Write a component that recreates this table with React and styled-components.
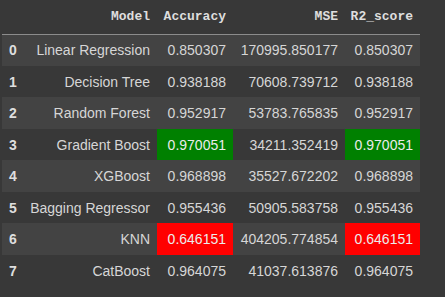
import styled, { createGlobalStyle } from 'styled-components';

const GlobalStyle = createGlobalStyle`
  html, body {
    margin: 0;
    padding: 0;
    background: #383838;
  }
`;

const Page = styled.div`
  width: 445px;
  height: 297px;
  background: #383838;
  overflow: hidden;
`;

const Table = styled.table`
  margin-left: 2px;
  border-collapse: collapse;
  border-spacing: 0;
  table-layout: fixed;
  width: 418px;
  color: #d6d6d6;
  font-family: 'Liberation Sans', Arial, sans-serif;
  font-size: 14px;
`;

const HeadCell = styled.th`
  width: ${(p) => p.$w}px;
  height: 34px;
  padding: 0 7px 0 0;
  box-sizing: border-box;
  text-align: right;
  vertical-align: middle;
  font-family: 'Liberation Mono', 'DejaVu Sans Mono', monospace;
  font-weight: 700;
  font-size: 13px;
  color: #dedede;
  border-bottom: 1px solid #8c8c8c;
  white-space: nowrap;
`;

// rows alternate 32/31px so they land on the same lines as the original 31.5px rows
const Row = styled.tr`
  height: ${(p) => (p.$odd ? 31 : 32)}px;
  background: ${(p) => (p.$odd ? '#383838' : '#434343')};
`;

const IndexCell = styled.th`
  padding: 0 0 0 7px;
  box-sizing: border-box;
  text-align: left;
  font-weight: 700;
  color: #dedede;
`;

const Cell = styled.td`
  padding: 0 7px 0 0;
  box-sizing: border-box;
  text-align: right;
  white-space: nowrap;
  background: ${(p) => p.$bg || 'transparent'};
  color: ${(p) => (p.$bg ? '#ececec' : '#d6d6d6')};
`;

const rows = [
  ['Linear Regression', '0.850307', '170995.850177', '0.850307'],
  ['Decision Tree', '0.938188', '70608.739712', '0.938188'],
  ['Random Forest', '0.952917', '53783.765835', '0.952917'],
  ['Gradient Boost', '0.970051', '34211.352419', '0.970051'],
  ['XGBoost', '0.968898', '35527.672202', '0.968898'],
  ['Bagging Regressor', '0.955436', '50905.583758', '0.955436'],
  ['KNN', '0.646151', '404205.774854', '0.646151'],
  ['CatBoost', '0.964075', '41037.613876', '0.964075'],
];

// best score gets green, worst gets red
const highlight = (i) => (i === 3 ? '#008000' : i === 6 ? '#ff0000' : null);

export default function App() {
  return (
    <Page>
      <GlobalStyle />
      <Table>
        <thead>
          <tr>
            <HeadCell $w={22} />
            <HeadCell $w={133}>Model</HeadCell>
            <HeadCell $w={76}>Accuracy</HeadCell>
            <HeadCell $w={112}>MSE</HeadCell>
            <HeadCell $w={75}>R2_score</HeadCell>
          </tr>
        </thead>
        <tbody>
          {rows.map((r, i) => (
            <Row key={i} $odd={i % 2 === 1}>
              <IndexCell>{i}</IndexCell>
              <Cell>{r[0]}</Cell>
              <Cell $bg={highlight(i)}>{r[1]}</Cell>
              <Cell>{r[2]}</Cell>
              <Cell $bg={highlight(i)}>{r[3]}</Cell>
            </Row>
          ))}
        </tbody>
      </Table>
    </Page>
  );
}
